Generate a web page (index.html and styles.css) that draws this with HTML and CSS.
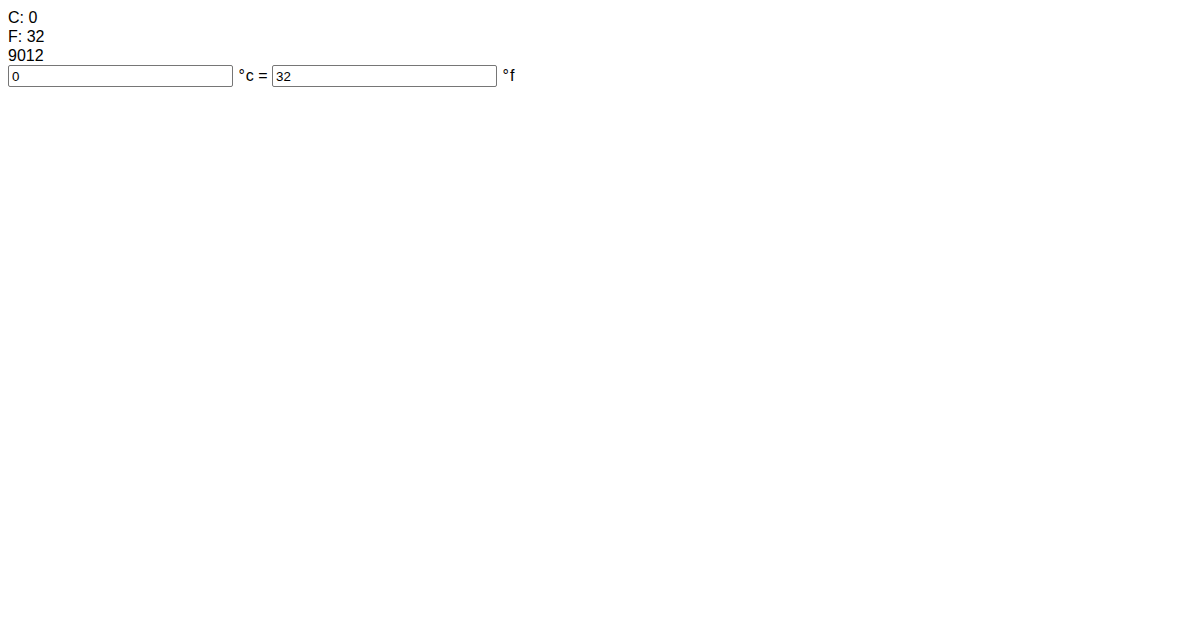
FILE: index.html
```html
<!DOCTYPE html>
<html>
<head>
<meta charset="utf-8">
<link rel="stylesheet" href="styles.css">
</head>
<body>
<div class="line">C: 0</div>
<div class="line">F: 32</div>
<div class="line">9012</div>
<div class="line row">
<input class="temp" type="text" value="0"> <span class="deg">&deg;</span>c = <input class="temp" type="text" value="32"> <span class="deg">&deg;</span>f
</div>
</body>
</html>
```
FILE: styles.css
```css
body {
  margin: 8px;
  font-family: "Liberation Sans", Arial, sans-serif;
  font-size: 16px;
  color: #000;
  background: #fff;
}
.line {
  line-height: 19px;
}
.row {
  line-height: 22px;
}
.temp {
  width: 225px;
  height: 22px;
  box-sizing: border-box;
  font-family: "Liberation Sans", Arial, sans-serif;
  font-size: 13.333px;
  padding: 1px 3px;
  border: 1px solid #767676;
  border-radius: 2px;
  margin: 0;
  vertical-align: top;
}
.deg {
  margin-left: 1px;
  margin-right: 1px;
}
```
